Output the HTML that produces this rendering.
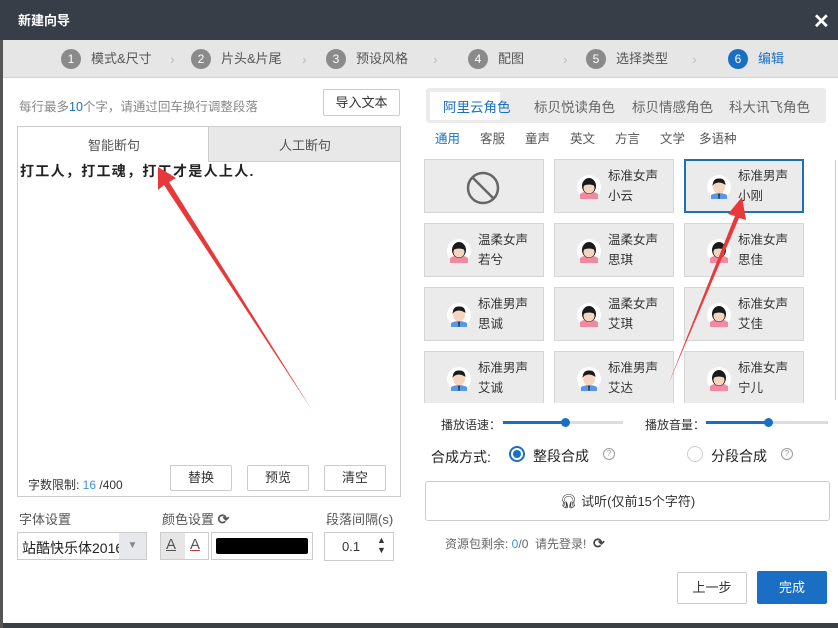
<!DOCTYPE html>
<html><head><meta charset="utf-8"><style>
*{margin:0;padding:0;box-sizing:border-box}
body{width:838px;height:628px;overflow:hidden;background:#3a3f44;font-family:"Liberation Sans","Noto Sans CJK SC",sans-serif;font-size:13px;color:#333;position:relative}
.a{position:absolute}
.title{left:0;top:0;width:838px;height:40px;background:#373e47;color:#fff;font-weight:bold;font-size:13px;padding:10px 18px}
.steps{left:3px;top:40px;width:835px;height:38px;background:#e6e6e6;border-bottom:1px solid #d4d4d4}
.main{left:3px;top:78px;width:835px;height:545px;background:#fff}
.num{width:20px;height:20px;border-radius:50%;background:#8a8a8a;color:#fff;font-size:12px;text-align:center;line-height:20px}
.st{font-size:13px;color:#555;line-height:20px}
.chev{color:#bbb;font-size:14px;line-height:20px}
.btn{border:1px solid #ccc;background:#fff;border-radius:2px;text-align:center;color:#333}
.card{width:120px;height:54px;background:#ebebeb;border:1px solid #d6d6d6}
.card .t{position:absolute;left:53px;top:6px;line-height:20px;font-size:12.5px;color:#333}
.card svg{position:absolute;left:22px;top:15px}
.sel{border:2px solid #1e6fb8}
</style></head><body>
<div class="a title">新建向导</div>
<div class="a" style="left:813px;top:9px;color:#fff;font-size:20px;font-weight:bold">✕</div>
<div class="a steps"></div>
<div class="a num" style="left:61px;top:49px">1</div><div class="a st" style="left:91px;top:49px">模式&amp;尺寸</div><div class="a chev" style="left:170px;top:49px">›</div>
<div class="a num" style="left:191px;top:49px">2</div><div class="a st" style="left:221px;top:49px">片头&amp;片尾</div><div class="a chev" style="left:302px;top:49px">›</div>
<div class="a num" style="left:326px;top:49px">3</div><div class="a st" style="left:356px;top:49px">预设风格</div><div class="a chev" style="left:433px;top:49px">›</div>
<div class="a num" style="left:468px;top:49px">4</div><div class="a st" style="left:498px;top:49px">配图</div><div class="a chev" style="left:563px;top:49px">›</div>
<div class="a num" style="left:586px;top:49px">5</div><div class="a st" style="left:616px;top:49px">选择类型</div><div class="a chev" style="left:692px;top:49px">›</div>
<div class="a num" style="left:728px;top:49px;background:#1a6fc4">6</div><div class="a st" style="left:758px;top:49px;color:#1a6fc4">编辑</div>
<div class="a main"></div>
<div class="a" style="left:0;top:40px;width:3px;height:588px;background:#555"></div>

<div class="a" style="left:19px;top:96px;color:#888;font-size:12.5px">每行最多<span style="color:#1a6fc4">10</span>个字，请通过回车换行调整段落</div>
<div class="a btn" style="left:323px;top:89px;width:77px;height:27px;line-height:25px;font-size:13px">导入文本</div>
<div class="a" style="left:17px;top:126px;width:384px;height:371px;border:1px solid #ccc"></div>
<div class="a" style="left:208px;top:127px;width:192px;height:35px;background:#e8e8e8;border-left:1px solid #ccc;border-bottom:1px solid #ccc"></div>
<div class="a" style="left:88px;top:135px;color:#555">智能断句</div>
<div class="a" style="left:279px;top:135px;color:#555">人工断句</div>
<div class="a" style="left:20px;top:161px;font-weight:bold;font-size:14px;letter-spacing:1.3px;color:#222">打工人，打工魂，打工才是人上人.</div>
<div class="a" style="left:28px;top:476px;font-size:12px">字数限制: <span style="color:#3d8fd6">16</span> /400</div>
<div class="a btn" style="left:170px;top:465px;width:62px;height:26px;line-height:24px">替换</div>
<div class="a btn" style="left:247px;top:465px;width:62px;height:26px;line-height:24px">预览</div>
<div class="a btn" style="left:324px;top:465px;width:62px;height:26px;line-height:24px">清空</div>

<div class="a" style="left:19px;top:509px;color:#555">字体设置</div>
<div class="a" style="left:162px;top:509px;color:#555">颜色设置 <b style="font-size:14px">⟳</b></div>
<div class="a" style="left:326px;top:509px;color:#555">段落间隔(s)</div>
<div class="a" style="left:17px;top:532px;width:130px;height:28px;border:1px solid #ccc;overflow:hidden"></div>
<div class="a" style="left:22px;top:538px;font-size:14px;color:#222">站酷快乐体2016</div>
<div class="a" style="left:119px;top:533px;width:27px;height:26px;background:#e6e8eb;color:#888;text-align:center;line-height:26px;font-size:10px">▼</div>
<div class="a" style="left:160px;top:532px;width:49px;height:28px;border:1px solid #ccc;background:#fff"></div>
<div class="a" style="left:161px;top:533px;width:24px;height:26px;background:#e6e6e6"></div>
<div class="a" style="left:166px;top:536px;font-size:15px;text-decoration:underline;color:#555">A</div>
<div class="a" style="left:190px;top:536px;font-size:15px;text-decoration:underline;text-decoration-color:#c33;color:#555">A</div>
<div class="a" style="left:211px;top:532px;width:102px;height:28px;border:1px solid #ccc;padding:5px 4px"><div style="background:#000;height:16px;border-radius:2px"></div></div>
<div class="a" style="left:324px;top:532px;width:70px;height:29px;border:1px solid #ccc"></div>
<div class="a" style="left:342px;top:539px;font-size:13px">0.1</div>
<div class="a" style="left:377px;top:535px;font-size:9px;line-height:10px;color:#333">▲<br>▼</div>

<div class="a" style="left:426px;top:88px;width:400px;height:35px;background:#ebebeb;border-radius:3px"></div>
<div class="a" style="left:430px;top:92px;width:70px;height:28px;background:#fff"></div>
<div class="a" style="left:443px;top:96px;color:#1a6fc4;font-size:13.5px">阿里云角色</div>
<div class="a" style="left:534px;top:96px;color:#666;font-size:13.5px">标贝悦读角色</div>
<div class="a" style="left:632px;top:96px;color:#666;font-size:13.5px">标贝情感角色</div>
<div class="a" style="left:729px;top:96px;color:#666;font-size:13.5px">科大讯飞角色</div>
<div class="a" style="left:435px;top:128px;color:#1a6fc4;font-size:12.5px">通用</div>
<div class="a" style="left:480px;top:128px;color:#555;font-size:12.5px">客服</div>
<div class="a" style="left:525px;top:128px;color:#555;font-size:12.5px">童声</div>
<div class="a" style="left:570px;top:128px;color:#555;font-size:12.5px">英文</div>
<div class="a" style="left:615px;top:128px;color:#555;font-size:12.5px">方言</div>
<div class="a" style="left:660px;top:128px;color:#555;font-size:12.5px">文学</div>
<div class="a" style="left:699px;top:128px;color:#555;font-size:12.5px">多语种</div>

<svg width="0" height="0" style="position:absolute"><defs>
<g id="f"><circle cx="12" cy="12" r="12" fill="#fff"/><path d="M3 19 Q12 13 21 19 L21 24 L3 24Z" fill="#f08aa0"/><ellipse cx="12" cy="11" rx="7" ry="8" fill="#1a1a1a"/><ellipse cx="12" cy="13" rx="5.5" ry="5.5" fill="#f5d5c0"/><path d="M6 9 Q12 4 18 9 L18 11 Q12 8 6 11Z" fill="#1a1a1a"/></g>
<g id="m"><circle cx="12" cy="12" r="12" fill="#fff"/><path d="M4 20 Q12 16 20 20 L20 24 L4 24Z" fill="#5a95e6"/><path d="M11 18 L13 18 L12.5 24 L11.5 24Z" fill="#234"/><ellipse cx="12" cy="12" rx="6" ry="6.5" fill="#f5d5c0"/><path d="M5.5 11 Q6 3 12 3.5 Q18 3 18.5 10 L17 9 Q12 6 7 9Z" fill="#1a1a1a"/></g>
</defs></svg>

<div class="a card" style="left:424px;top:159px"><svg style="left:40px;top:10px" width="36" height="36" viewBox="0 0 36 36"><circle cx="18" cy="18" r="15" fill="none" stroke="#666" stroke-width="2.5"/><line x1="7.5" y1="7.5" x2="28.5" y2="28.5" stroke="#666" stroke-width="2.5"/></svg></div>
<div class="a card" style="left:554px;top:159px"><svg width="24" height="24"><use href="#f"/></svg><div class="t">标准女声<br>小云</div></div>
<div class="a card sel" style="left:684px;top:159px"><svg width="24" height="24" style="left:21px;top:14px"><use href="#m"/></svg><div class="t" style="left:52px;top:5px">标准男声<br>小刚</div></div>
<div class="a card" style="left:424px;top:223px"><svg width="24" height="24"><use href="#f"/></svg><div class="t">温柔女声<br>若兮</div></div>
<div class="a card" style="left:554px;top:223px"><svg width="24" height="24"><use href="#f"/></svg><div class="t">温柔女声<br>思琪</div></div>
<div class="a card" style="left:684px;top:223px"><svg width="24" height="24"><use href="#f"/></svg><div class="t">标准女声<br>思佳</div></div>
<div class="a card" style="left:424px;top:287px"><svg width="24" height="24"><use href="#m"/></svg><div class="t">标准男声<br>思诚</div></div>
<div class="a card" style="left:554px;top:287px"><svg width="24" height="24"><use href="#f"/></svg><div class="t">温柔女声<br>艾琪</div></div>
<div class="a card" style="left:684px;top:287px"><svg width="24" height="24"><use href="#f"/></svg><div class="t">标准女声<br>艾佳</div></div>
<div class="a card" style="left:424px;top:351px;height:52px;border-bottom:none"><svg width="24" height="24"><use href="#m"/></svg><div class="t">标准男声<br>艾诚</div></div>
<div class="a card" style="left:554px;top:351px;height:52px;border-bottom:none"><svg width="24" height="24"><use href="#m"/></svg><div class="t">标准男声<br>艾达</div></div>
<div class="a card" style="left:684px;top:351px;height:52px;border-bottom:none"><svg width="24" height="24"><use href="#f"/></svg><div class="t">标准女声<br>宁儿</div></div>
<div class="a" style="left:835px;top:160px;width:1px;height:240px;background:#ccc"></div>

<div class="a" style="left:441px;top:416px;font-size:12px">播放语速：</div>
<div class="a" style="left:503px;top:421px;width:120px;height:3px;background:#ddd"></div>
<div class="a" style="left:503px;top:421px;width:62px;height:3px;background:#1a6fc4"></div>
<div class="a" style="left:561px;top:418px;width:9px;height:9px;border-radius:50%;background:#1a6fc4"></div>
<div class="a" style="left:645px;top:416px;font-size:12px">播放音量：</div>
<div class="a" style="left:706px;top:421px;width:122px;height:3px;background:#ddd"></div>
<div class="a" style="left:706px;top:421px;width:62px;height:3px;background:#1a6fc4"></div>
<div class="a" style="left:764px;top:418px;width:9px;height:9px;border-radius:50%;background:#1a6fc4"></div>

<div class="a" style="left:431px;top:447px;font-size:14px;color:#222">合成方式:</div>
<div class="a" style="left:509px;top:446px;width:16px;height:16px;border-radius:50%;border:2px solid #1a6fc4;padding:2px"><div style="width:8px;height:8px;border-radius:50%;background:#1a6fc4"></div></div>
<div class="a" style="left:533px;top:446px;font-size:14px;color:#222">整段合成</div>
<div class="a" style="left:603px;top:448px;width:12px;height:12px;border-radius:50%;border:1px solid #999;font-size:8px;color:#999;text-align:center;line-height:10px">?</div>
<div class="a" style="left:687px;top:446px;width:16px;height:16px;border-radius:50%;border:1px solid #ccc"></div>
<div class="a" style="left:711px;top:446px;font-size:14px;color:#222">分段合成</div>
<div class="a" style="left:781px;top:448px;width:12px;height:12px;border-radius:50%;border:1px solid #999;font-size:8px;color:#999;text-align:center;line-height:10px">?</div>

<div class="a btn" style="left:425px;top:481px;width:405px;height:40px;line-height:38px;font-size:13px;border-radius:3px"><span style="font-size:14px">🎧︎</span> 试听(仅前15个字符)</div>
<div class="a" style="left:445px;top:535px;font-size:12px;color:#666">资源包剩余: <span style="color:#3d8fd6">0</span>/0 &nbsp;请先登录! &nbsp;<b style="color:#444;font-size:14px">⟳</b></div>

<div class="a btn" style="left:677px;top:572px;width:70px;height:32px;line-height:30px;font-size:13px">上一步</div>
<div class="a" style="left:757px;top:571px;width:70px;height:33px;line-height:33px;background:#1a6fc4;color:#fff;text-align:center;border-radius:2px;font-size:13px">完成</div>

<svg class="a" style="left:0;top:0" width="838" height="628">
<polygon points="158,167 176,178 169,182 312,410 164,185 158,190" fill="#e8383a"/>
<polygon points="742,197 746,220 739,218 668,385 735,216 728,214" fill="#e8383a"/>
</svg>
</body></html>
